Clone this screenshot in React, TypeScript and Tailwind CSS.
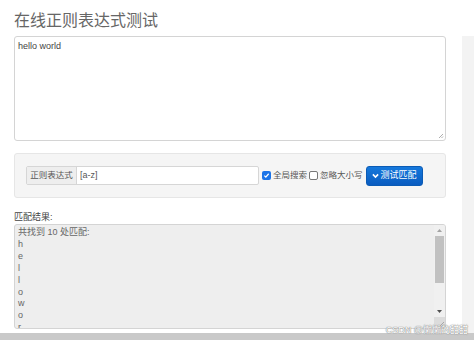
import React from "react";

export default function App() {
  const lines = ["共找到 10 处匹配:", "h", "e", "l", "l", "o", "w", "o", "r"];
  return (
    <div
      className="w-[474px] h-[340px] bg-white overflow-hidden flex flex-col text-[#555]"
      style={{ fontFamily: '"Liberation Sans", Arial, "Noto Sans CJK SC", sans-serif' }}
    >
      <div className="flex flex-1 min-h-0">
        <div className="w-[432px] ml-[14px] flex flex-col">
          <h1 className="text-[16px] leading-[20px] mt-[11px] h-[25px] text-[#666] font-normal">
            在线正则表达式测试
          </h1>
          <div className="h-[105px] border border-[#d4d4d4] rounded-[3px] bg-white relative">
            <div className="text-[9px] leading-[12px] pl-[3px] pt-[3px] text-[#444]">hello world</div>
            <svg className="absolute right-[1px] bottom-[1px]" width="6" height="6" viewBox="0 0 6 6">
              <path d="M5 1 L1 5 M5 3.5 L3.5 5" stroke="#999" strokeWidth="0.8" />
            </svg>
          </div>
          <div className="mt-[12px] h-[45px] bg-[#f5f5f5] border border-[#e6e6e6] rounded-[3px] flex items-center pl-[11px] pr-[6px]">
            <div className="flex items-center h-[19px] border border-[#d6d6d6] rounded-[2px] bg-white">
              <div className="h-full w-[50px] bg-[#eeeeee] border-r border-[#d6d6d6] text-[8.5px] flex items-center justify-center text-[#555]">
                正则表达式
              </div>
              <div className="w-[181px] h-full flex items-center pl-[3px] text-[9px] text-[#555]">[a-z]</div>
            </div>
            <div className="ml-[3px] w-[9px] h-[9px] rounded-[2px] bg-[#1a73e8] flex items-center justify-center">
              <svg width="7" height="7" viewBox="0 0 8 8">
                <path d="M1.5 4.2 L3.2 5.8 L6.5 2" stroke="white" strokeWidth="1.4" fill="none" />
              </svg>
            </div>
            <span className="ml-[2px] text-[8.5px] text-[#555]">全局搜索</span>
            <div className="ml-[2px] w-[9px] h-[9px] rounded-[2px] border border-[#777] bg-white" />
            <span className="ml-[2px] text-[8.5px] text-[#555]">忽略大小写</span>
            <div className="ml-[3px] w-[57px] h-[20px] rounded-[3px] bg-gradient-to-b from-[#1578dc] to-[#0a5cc0] border border-[#0b5bb5] flex items-center justify-center text-white text-[9px] gap-[2px]">
              <svg width="7" height="6" viewBox="0 0 8 6">
                <path d="M1 1.2 L4 4.2 L7 1.2" stroke="white" strokeWidth="1.8" fill="none" />
              </svg>
              <span>测试匹配</span>
            </div>
          </div>
          <div className="mt-[13px] text-[9px] leading-[12px] text-[#444]">匹配结果:</div>
          <div className="mt-[1px] h-[105px] border border-[#d4d4d4] rounded-[3px] bg-[#eeeeee] flex overflow-hidden">
            <div className="flex-1 pl-[3px] pt-[2px] text-[9px] leading-[11.9px] text-[#666]">
              {lines.map((l, i) => (
                <div key={i}>{l}</div>
              ))}
            </div>
            <div className="w-[11px] flex flex-col bg-[#f0f0f0]">
              <div className="h-[11px] flex items-center justify-center">
                <svg width="5" height="3" viewBox="0 0 5 3"><path d="M0 3 L2.5 0 L5 3 Z" fill="#a3a3a3" /></svg>
              </div>
              <div className="mx-[1px] h-[47px] bg-[#c1c1c1]" />
              <div className="flex-1" />
              <div className="h-[11px] flex items-center justify-center">
                <svg width="5" height="3" viewBox="0 0 5 3"><path d="M0 0 L2.5 3 L5 0 Z" fill="#505050" /></svg>
              </div>
              <div className="h-[11px] bg-[#dcdcdc] flex items-end justify-end">
                <svg width="7" height="7" viewBox="0 0 7 7">
                  <path d="M6 1 L1 6 M6 3.5 L3.5 6" stroke="#999" strokeWidth="0.8" />
                </svg>
              </div>
            </div>
          </div>
        </div>
        <div className="ml-[16px] mt-[36px] w-[12px] bg-[#f3f3f3]" />
      </div>
      <div className="h-[7px] bg-[#c9c9c9] relative shrink-0">
        <span
          className="absolute right-[6px] bottom-[5px] text-[9px] leading-[10px] text-white whitespace-nowrap"
          style={{ textShadow: "0 0 1px #777, 0 0 1px #777" }}
        >
          CSDN @懒懒的甜甜
        </span>
      </div>
    </div>
  );
}
